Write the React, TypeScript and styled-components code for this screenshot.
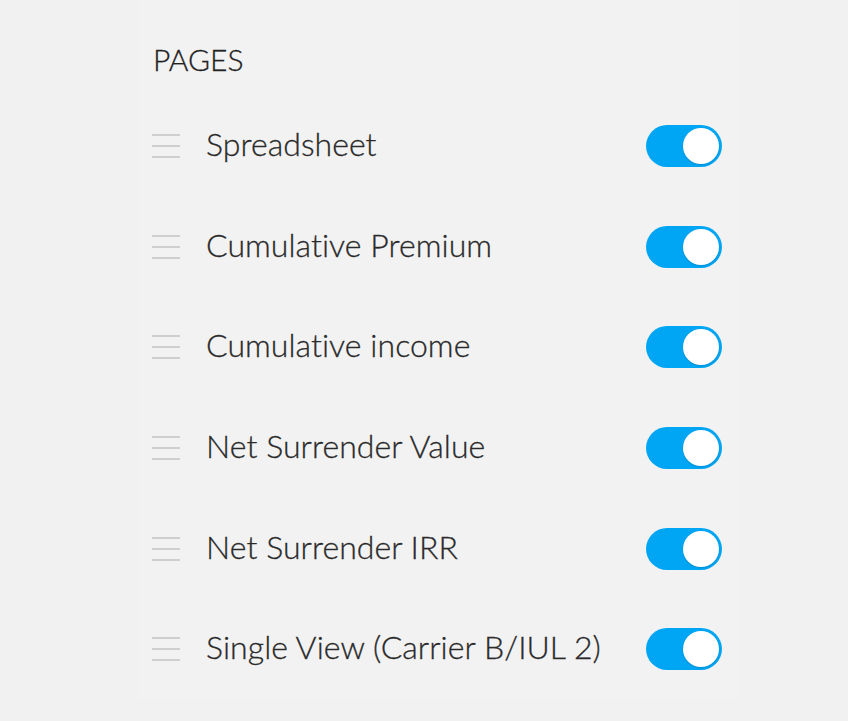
import { useState } from 'react'
import styled, { createGlobalStyle } from 'styled-components'

const GlobalStyle = createGlobalStyle`
  html, body {
    margin: 0;
    padding: 0;
    background: #f1f1f1;
  }
  body {
    font-family: Lato, 'Open Sans', sans-serif;
    color: #2a2a2a;
  }
`

const Page = styled.div`
  width: 848px;
  height: 721px;
  overflow: hidden;
`

const Panel = styled.section`
  margin-left: 138px;
  width: 602px;
  padding-top: 39px;
  background: #f2f2f2;
`

const Title = styled.h2`
  margin: 0 0 0 15px;
  height: 57px;
  line-height: 40px;
  font-size: 30px;
  font-weight: 300;
  color: #222;
  -webkit-text-stroke: 0.3px #222;
`

const List = styled.ul`
  list-style: none;
  margin: 0;
  padding: 0;
`

const Row = styled.li`
  height: 100.6px;
  display: flex;
  align-items: center;
  padding: 0 18px 0 14px;
`

const Handle = styled.span`
  width: 28px;
  height: 24px;
  display: flex;
  flex-direction: column;
  justify-content: space-between;
  margin-right: 26px;

  &::before,
  &::after,
  & > i {
    content: '';
    display: block;
    height: 2px;
    background: #cfcfcf;
  }
`

const Label = styled.span`
  flex: 1;
  font-size: 32px;
  font-weight: 300;
  line-height: 40px;
  padding-bottom: 4px;
  letter-spacing: 0.05px;
  color: #2a2a2a;
  -webkit-text-stroke: 0.3px #2a2a2a;
`

const Switch = styled.button<{ $on: boolean }>`
  position: relative;
  width: 76px;
  height: 42px;
  border: none;
  padding: 0;
  border-radius: 21px;
  background: ${({ $on }) => ($on ? '#00a6f4' : '#d3d3d3')};
  cursor: pointer;
  transition: background 0.2s;

  &::after {
    content: '';
    position: absolute;
    top: 3px;
    left: ${({ $on }) => ($on ? '37px' : '3px')};
    width: 36px;
    height: 36px;
    border-radius: 50%;
    background: #fff;
    box-shadow: 0 1px 2px rgba(0, 0, 0, 0.15);
    transition: left 0.2s;
  }
`

const initialPages = [
  'Spreadsheet',
  'Cumulative Premium',
  'Cumulative income',
  'Net Surrender Value',
  'Net Surrender IRR',
  'Single View (Carrier B/IUL 2)',
]

export default function App() {
  const [enabled, setEnabled] = useState<boolean[]>(initialPages.map(() => true))

  const toggle = (idx: number) =>
    setEnabled((prev) => prev.map((v, i) => (i === idx ? !v : v)))

  return (
    <Page>
      <GlobalStyle />
      <Panel>
        <Title>PAGES</Title>
        <List>
          {initialPages.map((name, i) => (
            <Row key={name}>
              <Handle>
                <i />
              </Handle>
              <Label>{name}</Label>
              <Switch $on={enabled[i]} onClick={() => toggle(i)} aria-label={name} />
            </Row>
          ))}
        </List>
      </Panel>
    </Page>
  )
}
